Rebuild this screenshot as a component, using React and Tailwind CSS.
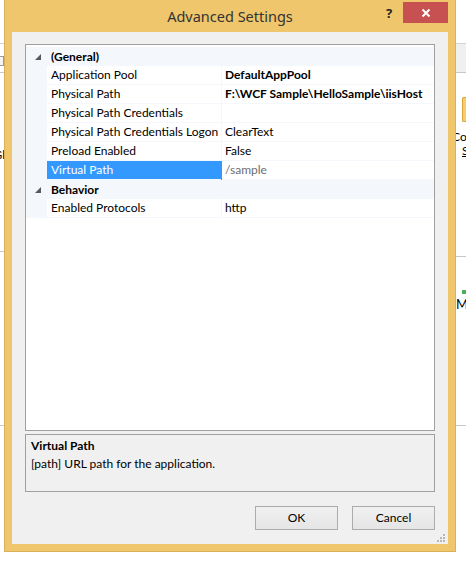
const rows = [
  { cat: true, name: '(General)' },
  { name: 'Application Pool', value: 'DefaultAppPool', bold: true },
  { name: 'Physical Path', value: 'F:\\WCF Sample\\HelloSample\\iisHost', bold: true },
  { name: 'Physical Path Credentials', value: '' },
  { name: 'Physical Path Credentials Logon', value: 'ClearText' },
  { name: 'Preload Enabled', value: 'False' },
  { name: 'Virtual Path', value: '/sample', selected: true, readonly: true },
  { cat: true, name: 'Behavior' },
  { name: 'Enabled Protocols', value: 'http' },
];

function Expander() {
  return (
    <svg width="6" height="6" viewBox="0 0 6 6" className="block">
      <polygon points="6,0 6,6 0,6" fill="#595959" />
    </svg>
  );
}

function GridRow({ r }) {
  if (r.cat) {
    return (
      <div className="flex h-[19px] items-center bg-[#f4f7fc]">
        <div className="flex w-[21px] justify-end pr-[6px]">
          <Expander />
        </div>
        <span className="pl-[4px] font-bold">{r.name}</span>
      </div>
    );
  }
  return (
    <div className="flex h-[19px]">
      <div className="w-[21px] shrink-0 bg-[#f4f7fc]" />
      <div
        className={
          r.selected
            ? 'flex h-[19px] w-[174px] shrink-0 items-center overflow-hidden whitespace-nowrap border-b border-[#f4f7fc] bg-[#3399ff] pl-[4px] text-white'
            : 'flex h-[19px] w-[174px] shrink-0 items-center overflow-hidden whitespace-nowrap border-b border-[#f4f7fc] pl-[4px]'
        }
      >
        {r.name}
      </div>
      <div className={r.selected ? 'w-px shrink-0 bg-[#3399ff]' : 'w-px shrink-0 bg-[#f4f7fc]'} />
      <div
        className={
          'flex h-[19px] flex-1 items-center overflow-hidden whitespace-nowrap border-b border-[#f4f7fc] pl-[3px] ' +
          (r.bold ? 'font-bold ' : '') +
          (r.readonly ? 'text-[#6d6d6d]' : '')
        }
      >
        {r.value}
      </div>
    </div>
  );
}

// The IIS Manager window that sits behind the dialog; only its edges show.
function Backdrop() {
  return (
    <div className="absolute inset-0 flex flex-col font-['Lato',sans-serif] text-[12px] leading-[14px] text-black">
      <div className="h-[43px] shrink-0" />
      <div className="h-px shrink-0 bg-[#d4d4d4]" />
      <div className="flex h-[28px] shrink-0 justify-between">
        <div className="mt-[12px] h-[10px] w-[4px] border border-l-0 border-[#9a9a9a] bg-[#f4f4f4]" />
        <div className="w-[11px] bg-[#f0f0f0]" />
      </div>
      <div className="h-px shrink-0 bg-[#c9c9c9]" />
      <div className="flex h-[178px] shrink-0 justify-between">
        <div className="flex w-[5px] justify-end overflow-hidden whitespace-nowrap pt-[75px]">
          <span>Gl</span>
        </div>
        <div className="flex w-[14px] flex-col overflow-hidden whitespace-nowrap pt-[24px]">
          <div className="ml-[10px] h-[25px] w-[6px] rounded-l-[2px] border border-r-0 border-[#d9a43a] bg-[#f6cd6a]" />
          <span className="mt-[8px]">Con</span>
          <span className="ml-[10px] underline">S</span>
        </div>
      </div>
      <div className="flex h-px shrink-0 justify-between">
        <div className="w-[5px] bg-[#c8c8c8]" />
      </div>
      <div className="flex h-[173px] shrink-0 justify-between">
        <div />
        <div className="flex w-[11px] flex-col overflow-hidden">
          <div className="h-[4px] shrink-0" />
          <div className="h-px bg-[#c8c8c8]" />
          <div className="ml-[7px] mt-[33px] h-[4px] w-[4px] bg-[#4caf50]" />
          <span className="ml-[1px] mt-[2px] text-[13px] leading-[16px]">M</span>
        </div>
      </div>
      <div className="h-px shrink-0 bg-[#c8c8c8]" />
    </div>
  );
}

function Grip() {
  const dots = [
    [6, 0],
    [3, 3],
    [6, 3],
    [0, 6],
    [3, 6],
    [6, 6],
  ];
  return (
    <svg width="8" height="8" viewBox="0 0 8 8" className="block">
      {dots.map(([x, y]) => (
        <rect key={x + '-' + y} x={x} y={y} width="2" height="2" fill="#b8b8b8" />
      ))}
    </svg>
  );
}

export default function App() {
  return (
    <div className="relative h-[562px] w-[466px] overflow-hidden bg-white">
      <Backdrop />

      {/* Advanced Settings dialog */}
      <div className="absolute left-[5px] top-0 flex h-[551px] w-[450px] flex-col bg-[#efc66c] font-['Lato',sans-serif] shadow-[0_0_0_1px_#dcb05a]">
        <div className="relative flex h-[32px] shrink-0 items-center justify-center">
          <span className="pt-[1px] font-['Noto_Sans',sans-serif] text-[14.5px] leading-none text-[#333333]">
            Advanced Settings
          </span>
          <span className="absolute left-[381px] top-[5px] font-['Noto_Sans',sans-serif] text-[13px] font-bold leading-[16px] text-[#222]">
            ?
          </span>
          <button className="absolute right-[7px] top-[2px] flex h-[21px] w-[45px] items-center justify-center bg-[#c75050]">
            <svg width="10" height="10" viewBox="0 0 10 10">
              <path d="M1.5 1.5 L8.5 8.5 M8.5 1.5 L1.5 8.5" stroke="#ffffff" strokeWidth="2" />
            </svg>
          </button>
        </div>

        <div className="mx-[7px] flex h-[512px] flex-col bg-[#f0f0f0] px-[13px] pt-[12px] text-[12px] text-black">
          <div className="h-[387px] shrink-0 border border-[#a0a0a0] bg-white pt-[2px]">
            {rows.map((r) => (
              <GridRow key={r.name} r={r} />
            ))}
          </div>

          <div className="mt-[3px] h-[58px] shrink-0 border border-[#a0a0a0] bg-[#f0f0f0] px-[5px] pt-[2px] leading-[18px]">
            <div className="font-bold">Virtual Path</div>
            <div>[path] URL path for the application.</div>
          </div>

          <div className="mt-[14px] flex justify-end gap-[14px]">
            <button className="flex h-[24px] w-[83px] items-center justify-center border border-[#acacac] bg-[linear-gradient(#f0f0f0,#e5e5e5)] text-[12px]">
              OK
            </button>
            <button className="flex h-[24px] w-[83px] items-center justify-center border border-[#acacac] bg-[linear-gradient(#f0f0f0,#e5e5e5)] text-[12px]">
              Cancel
            </button>
          </div>

          <div className="mr-[-10px] mt-[4px] flex justify-end">
            <Grip />
          </div>
        </div>
      </div>
    </div>
  );
}
